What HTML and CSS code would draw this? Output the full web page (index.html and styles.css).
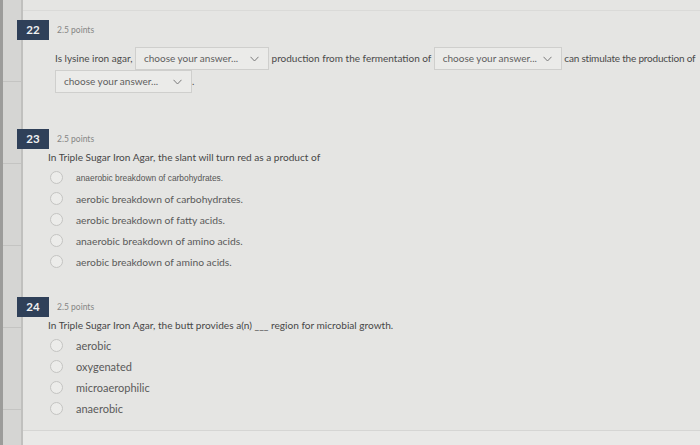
FILE: index.html
```html
<!DOCTYPE html>
<html lang="en">

<head>
    <meta charset="UTF-8">
    <title>Quiz</title>
    <link rel="stylesheet" href="styles.css">
</head>

<body>

    <aside class="sidebar"></aside>

    <main class="quiz">
        <div class="top-edge"></div>

        <section class="question q22">
            <div class="question-head">
                <span class="badge">22</span>
                <span class="points">2.5 points</span>
            </div>
            <div class="sentence">
                <div class="line">Is lysine iron agar,
                    <span class="select">choose your answer...
                        <svg class="chevron" width="9" height="6" viewBox="0 0 9 6"><path d="M0.5 0.8 L4.5 5 L8.5 0.8" fill="none" stroke="#7a7a7a" stroke-width="1"/></svg>
                    </span>
                    production from the fermentation of
                    <span class="select select-b">choose your answer...
                        <svg class="chevron" width="9" height="6" viewBox="0 0 9 6"><path d="M0.5 0.8 L4.5 5 L8.5 0.8" fill="none" stroke="#7a7a7a" stroke-width="1"/></svg>
                    </span>
                    <span class="tail">can stimulate the production of</span>
                </div>
                <div class="line">
                    <span class="select select-c">choose your answer...
                        <svg class="chevron" width="9" height="6" viewBox="0 0 9 6"><path d="M0.5 0.8 L4.5 5 L8.5 0.8" fill="none" stroke="#7a7a7a" stroke-width="1"/></svg>
                    </span>.
                </div>
            </div>
        </section>

        <section class="question q23">
            <div class="question-head">
                <span class="badge">23</span>
                <span class="points">2.5 points</span>
            </div>
            <p class="prompt">In Triple Sugar Iron Agar, the slant will turn red as a product of</p>
            <ul class="options">
                <li><span class="radio"></span><span class="option-text small">anaerobic breakdown of carbohydrates.</span></li>
                <li><span class="radio"></span><span class="option-text">aerobic breakdown of carbohydrates.</span></li>
                <li><span class="radio"></span><span class="option-text">aerobic breakdown of fatty acids.</span></li>
                <li><span class="radio"></span><span class="option-text">anaerobic breakdown of amino acids.</span></li>
                <li><span class="radio"></span><span class="option-text">aerobic breakdown of amino acids.</span></li>
            </ul>
        </section>

        <section class="question q24">
            <div class="question-head">
                <span class="badge">24</span>
                <span class="points">2.5 points</span>
            </div>
            <p class="prompt">In Triple Sugar Iron Agar, the butt provides a(n) ___ region for microbial growth.</p>
            <ul class="options">
                <li><span class="radio"></span><span class="option-text">aerobic</span></li>
                <li><span class="radio"></span><span class="option-text">oxygenated</span></li>
                <li><span class="radio"></span><span class="option-text">microaerophilic</span></li>
                <li><span class="radio"></span><span class="option-text">anaerobic</span></li>
            </ul>
        </section>

        <div class="page-end"></div>
    </main>

</body>

</html>
```

FILE: styles.css
```css
body {
    margin: 0;
    height: 445px;
    overflow: hidden;
    display: flex;
    background-color: #e5e5e3;
    font-family: Lato, "Open Sans", sans-serif;
    color: #4a4a4a;
}

.sidebar {
    width: 18px;
    flex-shrink: 0;
    background-color: #d5d5d3;
    border-left: 3px solid #9c9c9a;
    border-right: 2px solid #c0c0be;
    background-image: repeating-linear-gradient(to bottom, transparent 0, transparent 81px, #c4c4c2 81px, #c4c4c2 82px);
}

.quiz {
    flex: 1;
    min-width: 0;
}

.top-edge {
    height: 10px;
    border-bottom: 1px solid #dadad8;
}

.question-head {
    display: flex;
    align-items: center;
    gap: 8px;
    height: 20px;
}

.badge {
    width: 32px;
    height: 20px;
    margin-left: -6px;
    background-color: #2f4059;
    color: #f2f2f2;
    font-weight: bold;
    font-size: 11.5px;
    line-height: 20px;
    text-align: center;
}

.points {
    font-size: 8.5px;
    color: #858585;
}

/* question 22 */

.q22 {
    margin-top: 9px;
}

.sentence {
    margin-left: 32px;
    margin-top: 7px;
    font-size: 10px;
}

.line {
    height: 23px;
    line-height: 23px;
    white-space: nowrap;
}

.tail {
    letter-spacing: -0.2px;
}

.select {
    display: inline-block;
    box-sizing: border-box;
    width: 134px;
    height: 23px;
    padding-left: 8px;
    border: 1px solid #cfcfcd;
    background-color: #ebebe9;
    color: #5e5e5e;
    line-height: 21px;
    vertical-align: top;
    position: relative;
}

.select-b {
    width: 128px;
}

.select-c {
    width: 137px;
}

.chevron {
    position: absolute;
    right: 9px;
    top: 8px;
}

/* questions 23 and 24 */

.q23 {
    margin-top: 36px;
}

.q24 {
    margin-top: 25px;
}

.prompt {
    margin: 0 0 2px 25px;
    font-size: 10.1px;
    line-height: 16px;
    color: #474747;
}

.options {
    list-style: none;
    margin: 0 0 0 27px;
    padding: 0;
}

.options li {
    display: flex;
    align-items: center;
    height: 21px;
}

.radio {
    width: 11px;
    height: 11px;
    border: 1px solid #c4c4c2;
    border-radius: 50%;
    background-color: #ececea;
    margin-right: 13px;
}

.option-text {
    font-size: 10.3px;
    color: #5a5a5a;
}

.q24 .option-text {
    font-size: 11px;
}

.option-text.small {
    font-family: "Liberation Sans", Arial, sans-serif;
    font-size: 8.4px;
    color: #555555;
}

.page-end {
    margin-top: 11px;
    border-top: 1px solid #d6d6d4;
    height: 20px;
    background-color: #e9e9e7;
}
```
